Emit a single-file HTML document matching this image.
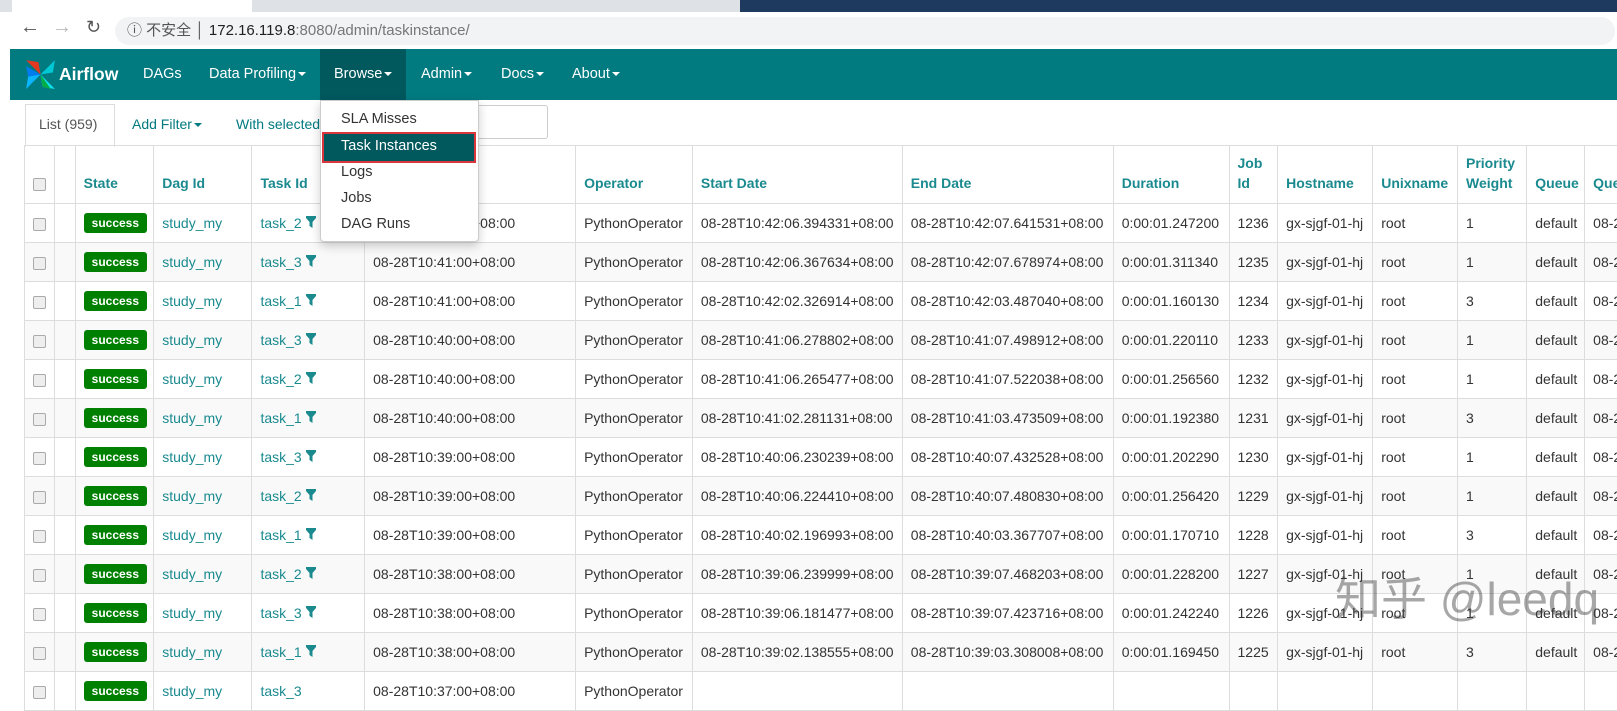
<!DOCTYPE html><html><head><meta charset="utf-8"><style>
body{margin:0;width:1617px;height:678px;overflow:hidden;font-family:"Liberation Sans","Noto Sans CJK SC",sans-serif;background:#fff;position:relative;font-size:13px}
.tabs{position:absolute;left:0;top:0;width:1617px;height:12px;background:#dee1e6}
.tab1{position:absolute;left:12px;top:0;width:240px;height:12px;background:#fff}
.tab2{position:absolute;left:740px;top:0;width:877px;height:12px;background:#1e3a5f}
.addr{position:absolute;left:0;top:12px;width:1617px;height:37px;background:#fff}
.url{position:absolute;left:115px;top:17px;width:1500px;height:28px;border-radius:14px;background:#f1f3f4;font-size:15px;line-height:28px;color:#202124}
.nav{position:absolute;left:10px;top:49px;width:1607px;height:51px;background:#017a80}
.nav span{position:absolute;top:0;line-height:51px;color:#fff;font-size:14.5px}
.browse{position:absolute;left:310px;top:0;width:86px;height:51px;background:#01585d}
.caret{display:inline-block;width:0;height:0;border-left:4px solid transparent;border-right:4px solid transparent;border-top:4px solid currentColor;vertical-align:middle;margin-left:2px}
.tabsbar{position:absolute;left:25px;top:104px;width:1592px;height:41px;border-bottom:1px solid #ddd}
.tabsbar span{position:absolute;top:0;line-height:41px;color:#017a80;font-size:14px}
.act{position:absolute;left:0;top:0;width:88px;height:41px;border:1px solid #ddd;border-bottom:1px solid #fff;background:#fff}
.search{position:absolute;left:443px;top:105px;width:103px;height:32px;border:1px solid #ccc;border-radius:3px}
table{position:absolute;left:24px;top:145px;border-collapse:collapse;table-layout:fixed;width:1675px}
td,th{border:1px solid #ddd;padding:0 8px;white-space:nowrap;overflow:hidden;color:#333;font-size:14px;font-weight:normal;text-align:left}
th{height:47px;color:#1a8a8f;font-weight:bold;vertical-align:bottom;padding-bottom:10px;line-height:20px}
td{height:38px}
tr:nth-child(odd) td{background:#f9f9f9}
.cb{display:inline-block;width:11px;height:11px;border:1px solid #aaa;border-radius:2px;background:#eee;vertical-align:middle}
.lbl{display:inline-block;background:#008000;color:#fff;font-weight:bold;font-size:12px;padding:3px 8px;border-radius:3px}
.lk{color:#1a8a8f}
.menu{position:absolute;left:320px;top:100px;width:157px;height:140px;background:#fff;border:1px solid #ccc;box-shadow:0 4px 10px rgba(0,0,0,.2);border-radius:0 0 4px 4px}
.menu div{position:absolute;left:20px;font-size:14.5px;color:#333}
.ti{position:absolute;left:1px!important;top:31px;width:154px;height:31px;background:#01585d;border:2px solid #d9363e;box-sizing:border-box}
.wm{position:absolute;left:1335px;top:563px;font-size:46px;white-space:nowrap;color:rgba(60,60,60,.45)}
</style></head><body>
<div class="tabs"><div class="tab1"></div><div class="tab2"></div></div>
<div class="addr"><span style="position:absolute;left:20px;top:4px;font-size:20px;color:#555">←</span><span style="position:absolute;left:52px;top:4px;font-size:20px;color:#bbb">→</span><span style="position:absolute;left:86px;top:5px;font-size:18px;color:#555">↻</span></div>
<div class="url"><span style="margin-left:12px;color:#555">ⓘ 不安全 │ </span>172.16.119.8<span style="color:#777">:8080/admin/taskinstance/</span></div>
<div class="nav">
<svg style="position:absolute;left:14px;top:9px" width="33" height="33" viewBox="0 0 32 32"><path d="M16 16 L2 2 L14 4Z" fill="#e43921"/><path d="M16 16 L30 2 L28 14Z" fill="#00c7d4"/><path d="M16 16 L30 30 L18 28Z" fill="#11e1ee"/><path d="M16 16 L2 30 L4 18Z" fill="#0cb6ff"/><path d="M16 16 L4 18 L2 8Z" fill="#017cee"/><path d="M16 16 L18 28 L26 30Z" fill="#00ad46"/></svg>
<span style="left:49px;font-size:17.5px;font-weight:bold">Airflow</span>
<span style="left:133px">DAGs</span><span style="left:199px">Data Profiling<i class="caret"></i></span>
<div class="browse"></div><span style="left:324px">Browse<i class="caret"></i></span>
<span style="left:411px">Admin<i class="caret"></i></span><span style="left:491px">Docs<i class="caret"></i></span><span style="left:562px">About<i class="caret"></i></span>
</div>
<div class="tabsbar"><div class="act"></div><span style="left:14px;color:#555">List (959)</span><span style="left:107px">Add Filter<i class="caret"></i></span><span style="left:211px">With selected</span></div>
<div class="search"></div>
<table>
<colgroup><col style="width:29px"><col style="width:20px"><col style="width:76px"><col style="width:95px"><col style="width:109px"><col style="width:204px"><col style="width:113px"><col style="width:203px"><col style="width:204px"><col style="width:112px"><col style="width:47px"><col style="width:92px"><col style="width:82px"><col style="width:67px"><col style="width:56px"><col style="width:110px"></colgroup>
<tr><th><span class="cb"></span></th><th></th><th>State</th><th>Dag Id</th><th>Task Id</th><th>Execution Date</th><th>Operator</th><th>Start Date</th><th>End Date</th><th>Duration</th><th>Job<br>Id</th><th>Hostname</th><th>Unixname</th><th>Priority<br>Weight</th><th>Queue</th><th>Queued</th></tr>
<tr><td><span class="cb"></span></td><td></td><td><span class="lbl">success</span></td><td class="lk">study_my</td><td class="lk">task_2 <svg width="10" height="12" viewBox="0 0 10 12"><path d="M0 0H10V2L6.5 6V12L3.5 10V6L0 2Z" fill="#1a8a8f"/></svg></td><td>08-28T10:42:00+08:00</td><td>PythonOperator</td><td>08-28T10:42:06.394331+08:00</td><td>08-28T10:42:07.641531+08:00</td><td>0:00:01.247200</td><td>1236</td><td>gx-sjgf-01-hj</td><td>root</td><td>1</td><td>default</td><td>08-28</td></tr>
<tr><td><span class="cb"></span></td><td></td><td><span class="lbl">success</span></td><td class="lk">study_my</td><td class="lk">task_3 <svg width="10" height="12" viewBox="0 0 10 12"><path d="M0 0H10V2L6.5 6V12L3.5 10V6L0 2Z" fill="#1a8a8f"/></svg></td><td>08-28T10:41:00+08:00</td><td>PythonOperator</td><td>08-28T10:42:06.367634+08:00</td><td>08-28T10:42:07.678974+08:00</td><td>0:00:01.311340</td><td>1235</td><td>gx-sjgf-01-hj</td><td>root</td><td>1</td><td>default</td><td>08-28</td></tr>
<tr><td><span class="cb"></span></td><td></td><td><span class="lbl">success</span></td><td class="lk">study_my</td><td class="lk">task_1 <svg width="10" height="12" viewBox="0 0 10 12"><path d="M0 0H10V2L6.5 6V12L3.5 10V6L0 2Z" fill="#1a8a8f"/></svg></td><td>08-28T10:41:00+08:00</td><td>PythonOperator</td><td>08-28T10:42:02.326914+08:00</td><td>08-28T10:42:03.487040+08:00</td><td>0:00:01.160130</td><td>1234</td><td>gx-sjgf-01-hj</td><td>root</td><td>3</td><td>default</td><td>08-28</td></tr>
<tr><td><span class="cb"></span></td><td></td><td><span class="lbl">success</span></td><td class="lk">study_my</td><td class="lk">task_3 <svg width="10" height="12" viewBox="0 0 10 12"><path d="M0 0H10V2L6.5 6V12L3.5 10V6L0 2Z" fill="#1a8a8f"/></svg></td><td>08-28T10:40:00+08:00</td><td>PythonOperator</td><td>08-28T10:41:06.278802+08:00</td><td>08-28T10:41:07.498912+08:00</td><td>0:00:01.220110</td><td>1233</td><td>gx-sjgf-01-hj</td><td>root</td><td>1</td><td>default</td><td>08-28</td></tr>
<tr><td><span class="cb"></span></td><td></td><td><span class="lbl">success</span></td><td class="lk">study_my</td><td class="lk">task_2 <svg width="10" height="12" viewBox="0 0 10 12"><path d="M0 0H10V2L6.5 6V12L3.5 10V6L0 2Z" fill="#1a8a8f"/></svg></td><td>08-28T10:40:00+08:00</td><td>PythonOperator</td><td>08-28T10:41:06.265477+08:00</td><td>08-28T10:41:07.522038+08:00</td><td>0:00:01.256560</td><td>1232</td><td>gx-sjgf-01-hj</td><td>root</td><td>1</td><td>default</td><td>08-28</td></tr>
<tr><td><span class="cb"></span></td><td></td><td><span class="lbl">success</span></td><td class="lk">study_my</td><td class="lk">task_1 <svg width="10" height="12" viewBox="0 0 10 12"><path d="M0 0H10V2L6.5 6V12L3.5 10V6L0 2Z" fill="#1a8a8f"/></svg></td><td>08-28T10:40:00+08:00</td><td>PythonOperator</td><td>08-28T10:41:02.281131+08:00</td><td>08-28T10:41:03.473509+08:00</td><td>0:00:01.192380</td><td>1231</td><td>gx-sjgf-01-hj</td><td>root</td><td>3</td><td>default</td><td>08-28</td></tr>
<tr><td><span class="cb"></span></td><td></td><td><span class="lbl">success</span></td><td class="lk">study_my</td><td class="lk">task_3 <svg width="10" height="12" viewBox="0 0 10 12"><path d="M0 0H10V2L6.5 6V12L3.5 10V6L0 2Z" fill="#1a8a8f"/></svg></td><td>08-28T10:39:00+08:00</td><td>PythonOperator</td><td>08-28T10:40:06.230239+08:00</td><td>08-28T10:40:07.432528+08:00</td><td>0:00:01.202290</td><td>1230</td><td>gx-sjgf-01-hj</td><td>root</td><td>1</td><td>default</td><td>08-28</td></tr>
<tr><td><span class="cb"></span></td><td></td><td><span class="lbl">success</span></td><td class="lk">study_my</td><td class="lk">task_2 <svg width="10" height="12" viewBox="0 0 10 12"><path d="M0 0H10V2L6.5 6V12L3.5 10V6L0 2Z" fill="#1a8a8f"/></svg></td><td>08-28T10:39:00+08:00</td><td>PythonOperator</td><td>08-28T10:40:06.224410+08:00</td><td>08-28T10:40:07.480830+08:00</td><td>0:00:01.256420</td><td>1229</td><td>gx-sjgf-01-hj</td><td>root</td><td>1</td><td>default</td><td>08-28</td></tr>
<tr><td><span class="cb"></span></td><td></td><td><span class="lbl">success</span></td><td class="lk">study_my</td><td class="lk">task_1 <svg width="10" height="12" viewBox="0 0 10 12"><path d="M0 0H10V2L6.5 6V12L3.5 10V6L0 2Z" fill="#1a8a8f"/></svg></td><td>08-28T10:39:00+08:00</td><td>PythonOperator</td><td>08-28T10:40:02.196993+08:00</td><td>08-28T10:40:03.367707+08:00</td><td>0:00:01.170710</td><td>1228</td><td>gx-sjgf-01-hj</td><td>root</td><td>3</td><td>default</td><td>08-28</td></tr>
<tr><td><span class="cb"></span></td><td></td><td><span class="lbl">success</span></td><td class="lk">study_my</td><td class="lk">task_2 <svg width="10" height="12" viewBox="0 0 10 12"><path d="M0 0H10V2L6.5 6V12L3.5 10V6L0 2Z" fill="#1a8a8f"/></svg></td><td>08-28T10:38:00+08:00</td><td>PythonOperator</td><td>08-28T10:39:06.239999+08:00</td><td>08-28T10:39:07.468203+08:00</td><td>0:00:01.228200</td><td>1227</td><td>gx-sjgf-01-hj</td><td>root</td><td>1</td><td>default</td><td>08-28</td></tr>
<tr><td><span class="cb"></span></td><td></td><td><span class="lbl">success</span></td><td class="lk">study_my</td><td class="lk">task_3 <svg width="10" height="12" viewBox="0 0 10 12"><path d="M0 0H10V2L6.5 6V12L3.5 10V6L0 2Z" fill="#1a8a8f"/></svg></td><td>08-28T10:38:00+08:00</td><td>PythonOperator</td><td>08-28T10:39:06.181477+08:00</td><td>08-28T10:39:07.423716+08:00</td><td>0:00:01.242240</td><td>1226</td><td>gx-sjgf-01-hj</td><td>root</td><td>1</td><td>default</td><td>08-28</td></tr>
<tr><td><span class="cb"></span></td><td></td><td><span class="lbl">success</span></td><td class="lk">study_my</td><td class="lk">task_1 <svg width="10" height="12" viewBox="0 0 10 12"><path d="M0 0H10V2L6.5 6V12L3.5 10V6L0 2Z" fill="#1a8a8f"/></svg></td><td>08-28T10:38:00+08:00</td><td>PythonOperator</td><td>08-28T10:39:02.138555+08:00</td><td>08-28T10:39:03.308008+08:00</td><td>0:00:01.169450</td><td>1225</td><td>gx-sjgf-01-hj</td><td>root</td><td>3</td><td>default</td><td>08-28</td></tr>
<tr><td><span class="cb"></span></td><td></td><td><span class="lbl">success</span></td><td class="lk">study_my</td><td class="lk">task_3</td><td>08-28T10:37:00+08:00</td><td>PythonOperator</td><td></td><td></td><td></td><td></td><td></td><td></td><td></td><td></td><td></td></tr>
</table>
<div class="menu"><div style="top:10px">SLA Misses</div><div class="ti"></div><div style="top:37px;color:#fff">Task Instances</div><div style="top:63px">Logs</div><div style="top:89px">Jobs</div><div style="top:115px">DAG Runs</div></div>
<div class="wm">知乎 @leedq</div>
</body></html>
